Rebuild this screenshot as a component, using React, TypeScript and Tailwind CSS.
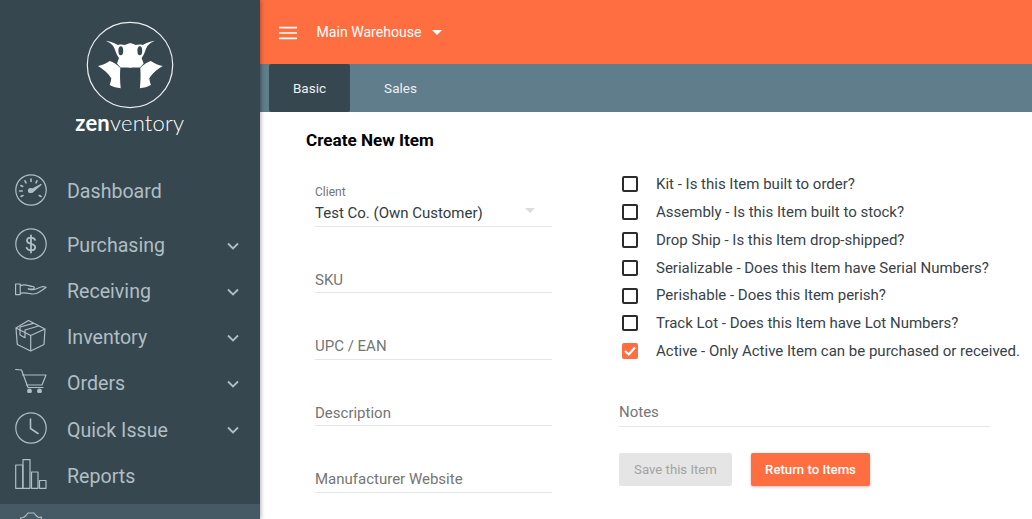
import React from "react";

const stroke = { fill: "none", stroke: "#b0bec5", strokeWidth: 1.2, strokeLinecap: "round" as const, strokeLinejoin: "round" as const };

function Gauge() {
  return (
    <svg viewBox="0 0 32 32" className="w-8 h-8" {...stroke}>
      <circle cx="16" cy="16" r="15.2" />
      <circle cx="15.5" cy="16.5" r="2" fill="#b0bec5" />
      <path d="M16.5 15.5 26 10.500 17.500 18" fill="#b0bec5" />
      <path d="M16 5v2.500M10 6.800l1 2M22 6.800l-1 2M5.800 11.500l2 1M4.600 17h2.600M6 22.500l2-1M26.200 22.500l-2-1" strokeWidth="1.600" />
    </svg>
  );
}
function Dollar() {
  return (
    <svg viewBox="0 0 32 32" className="w-8 h-8" {...stroke}>
      <circle cx="16" cy="16" r="15.2" />
      <path d="M20 11.800c-.6-1.400-2-2.100-4-2.100-2.400 0-4 1.200-4 3 0 4.200 8.200 2.300 8.200 6.600 0 1.900-1.700 3-4.200 3-2.200 0-3.800-.9-4.400-2.500M16 7.500v17" strokeWidth="1.800" />
    </svg>
  );
}
function Hand() {
  return (
    <svg viewBox="0 0 32 14" className="w-8 h-[14px]" {...stroke}>
      <path d="M.6 1h4.600v10.600H.6zM5.200 2.600c3-.9 5.600-.9 8-.1 1.600.5 3 1 4.600 1 1.600 0 2.200 1.600.6 2.200-1.500.5-3.600.4-5.200.2 2 .8 4.200 1.100 6.200.6 3-.8 6-2.800 8.600-2.800 1.600 0 3 .4 3 .9-2.600 1.600-6 4.600-9 5.700-2.600 1-5 .9-7.600.2-3-.8-5.400-1-9.200-.4" />
    </svg>
  );
}
function Box() {
  return (
    <svg viewBox="0 0 32 32" className="w-8 h-8" {...stroke}>
      <path d="M13.500.5 1 8 2.300 24.500 15.700 31 29 24.500 30 9ZM1 8 15.700 15.500 30 9M15.700 15.500V31" />
      <path d="M18.300 3.300 5 7V15L10 17.700V10L23.500 6" />
    </svg>
  );
}
function Cart() {
  return (
    <svg viewBox="0 0 32 24.500" className="w-8 h-[24.500px] -mt-[2px]" {...stroke}>
      <path d="M.7.500 6.500 1 13 18.500H28" />
      <path d="M7.500 6H31L27 16H11.500" />
      <circle cx="14.500" cy="22" r="1.800" fill="#b0bec5" />
      <circle cx="24.500" cy="22" r="1.800" fill="#b0bec5" />
    </svg>
  );
}
function Clock() {
  return (
    <svg viewBox="0 0 32 32" className="w-8 h-8" {...stroke}>
      <circle cx="16" cy="16" r="15.2" />
      <path d="M15.500 7V16.500L23 21.500" strokeWidth="1.600" />
    </svg>
  );
}
function Bars() {
  return (
    <svg viewBox="0 0 32 30" className="w-8 h-[30px]" {...stroke}>
      <rect x="0.700" y="6" width="7" height="23.300" />
      <rect x="8" y="0.700" width="7" height="28.600" />
      <rect x="16.500" y="13" width="6.500" height="16.300" />
      <rect x="24.500" y="21.500" width="6.500" height="7.800" />
    </svg>
  );
}
function Gear() {
  return (
    <svg viewBox="0 0 32 32" className="w-8 h-8" {...stroke}>
      <path d="M1 16c0-3 1-4 2.500-4.500L6 9l-.5-3 3-.5L11 3.500 13 1h6l2 2.500 2.500 2 3-.5L26 9l2.500 2.500C30 12 31 13 31 16" />
    </svg>
  );
}
function Chevron() {
  return (
    <svg viewBox="0 0 12 8" className="w-3 h-2 absolute right-[21px] top-1/2 -mt-1" fill="none" stroke="#b0bec5" strokeWidth="1.800">
      <path d="M1 1.500 6 6.500 11 1.500" />
    </svg>
  );
}

function Logo() {
  const half = "M104.700 40.700C108 41 112 42 117 45 120 44.200 122.500 44.800 124 45 126 43.800 128 43.500 131 43.500V67.500H119.500L116 63.500 118 58C116.500 56 115.500 54 114.700 51.700 114 49.500 113 47.500 112 45.700 110 43.500 107.500 41.800 104.700 40.700Z";
  const wing = "M97 66C101 65.500 105 63.500 108.700 61 112 62 116 64.500 119.300 68 118.800 74 119 81 119.700 88.300 116 87.800 112 86.800 108.700 85 109.500 83 110 80.500 110.300 78.300 107 73 102 69 97 66Z";
  return (
    <svg viewBox="85 21 88 88" className="w-[88px] h-[88px]">
      <circle cx="129" cy="65" r="42.700" fill="none" stroke="#eceff1" strokeWidth="1.200" />
      <g fill="#ffffff">
        <path d={half} />
        <path d={wing} />
        <g transform="translate(258.600 0) scale(-1 1)">
          <path d={half} />
          <path d={wing} />
        </g>
      </g>
      <g fill="#37474f">
        <ellipse cx="119.800" cy="50.800" rx="2.400" ry="4.500" />
        <ellipse cx="138.800" cy="50.800" rx="2.400" ry="4.500" />
      </g>
    </svg>
  );
}

function NavItem({ icon, label, more, className = "" }: { icon: React.ReactNode; label: string; more?: boolean; className?: string }) {
  return (
    <div className={`relative flex items-center h-[46.100px] pl-[15px] ${className}`}>
      <div className="w-8 -mt-[4px] flex justify-center shrink-0">{icon}</div>
      <span className="ml-5 text-[19.600px] text-[#b0bec5]">{label}</span>
      {more && <Chevron />}
    </div>
  );
}

function Field({ label, value, small }: { label?: string; value?: string; small?: string }) {
  return (
    <div className="h-[66.600px] flex flex-col justify-end">
      <div className="relative border-b border-[#e4e6e8] flex flex-col justify-end pb-[1.500px]">
        {small && <span className="text-[12px] leading-[14px] mb-[4.500px] text-[#757575]">{small}</span>}
        {value ? (
          <span className="text-[15px] leading-[21px] text-[#333a40]">{value}</span>
        ) : (
          <span className="text-[15px] leading-[21px] text-[#757575]">{label}</span>
        )}
        {small && <span className="absolute right-[17px] bottom-[13px] w-0 h-0 border-x-[5px] border-x-transparent border-t-[5px] border-t-[#dcdcdc]" />}
      </div>
    </div>
  );
}

const checks = [
  "Kit - Is this Item built to order?",
  "Assembly - Is this Item built to stock?",
  "Drop Ship - Is this Item drop-shipped?",
  "Serializable - Does this Item have Serial Numbers?",
  "Perishable - Does this Item perish?",
  "Track Lot - Does this Item have Lot Numbers?",
];

function Check({ label, checked }: { label: string; checked?: boolean }) {
  return (
    <div className="flex items-center h-[27.800px]">
      {checked ? (
        <div className="w-4 h-4 ml-[3px] rounded-[2px] bg-[#ff6e40] flex items-center justify-center">
          <svg viewBox="0 0 16 16" className="w-4 h-4" fill="none" stroke="#ffffff" strokeWidth="2.200">
            <path d="M3 8 6.800 11.500 13 4.500" />
          </svg>
        </div>
      ) : (
        <div className="w-4 h-4 ml-[3px] rounded-[2px] border-2 border-[#2b2b2b]" />
      )}
      <span className="ml-[18px] text-[15px] text-[#37424a] whitespace-nowrap">{label}</span>
    </div>
  );
}

export default function App() {
  return (
    <div className="flex w-[1032px] h-[519px] overflow-hidden bg-white font-['Roboto',sans-serif]">
      <aside className="relative z-10 w-[259.500px] shrink-0 bg-[#37474f] shadow-[1px_0_4px_rgba(0,0,0,0.3)] overflow-hidden">
        <div className="flex flex-col items-center h-[169px] pt-[21px]">
          <Logo />
          <div className="text-[22px] leading-[28px] text-white font-['Lato',sans-serif] tracking-[0.2px]">
            <span className="font-bold">zen</span>
            <span className="font-light">ventory</span>
          </div>
        </div>
        <NavItem icon={<Gauge />} label="Dashboard" className="mb-[7.700px]" />
        <NavItem icon={<Dollar />} label="Purchasing" more />
        <NavItem icon={<Hand />} label="Receiving" more />
        <NavItem icon={<Box />} label="Inventory" more />
        <NavItem icon={<Cart />} label="Orders" more />
        <NavItem icon={<Clock />} label="Quick Issue" more />
        <NavItem icon={<Bars />} label="Reports" />
        <div className="mt-[4.700px] bg-[#455a64] h-[60px] pl-[15px] pt-[8px]">
          <Gear />
        </div>
      </aside>

      <main className="flex-1 min-w-0 flex flex-col">
        <header className="h-16 bg-[#ff6e40] flex items-center pl-[19px] pt-[1px] text-white">
          <svg viewBox="0 0 18 14" className="w-[18px] h-[14px]" fill="#ffffff">
            <path d="M0 .8h18v1.600H0zM0 6.200h18v1.600H0zM0 11.600h18v1.600H0z" />
          </svg>
          <span className="ml-5 text-[14.100px]">Main Warehouse</span>
          <span className="ml-[10px] w-0 h-0 border-x-[5px] border-x-transparent border-t-[5px] border-t-white" />
        </header>
        <nav className="h-12 bg-[#607d8b] flex pl-[9.500px] text-[13.500px] text-[#eceff1] shadow-[inset_3px_0_3px_-2px_rgba(0,0,0,0.1)]">
          <div className="w-[81px] bg-[#37474f] rounded-[2px] flex items-center justify-center">Basic</div>
          <div className="w-[101px] flex items-center justify-center">Sales</div>
        </nav>
        <h1 className="ml-[46.500px] mt-[17px] text-[17.100px] leading-[22px] font-bold text-black">Create New Item</h1>
        <div className="flex ml-[55.500px]">
          <div className="w-[237px] mt-[9px]">
            <Field small="Client" value="Test Co. (Own Customer)" />
            <Field label="SKU" />
            <Field label="UPC / EAN" />
            <Field label="Description" />
            <Field label="Manufacturer Website" />
          </div>
          <div className="ml-[67px] w-[371px] pt-[19.600px]">
            {checks.map((c) => (
              <Check key={c} label={c} />
            ))}
            <Check label="Active - Only Active Item can be purchased or received." checked />
            <div className="h-[25px] mt-[36.900px] border-b border-[#e4e6e8] text-[15px] leading-[21px] text-[#757575]">Notes</div>
            <div className="flex mt-[26px] gap-[19px] text-[13.200px]">
              <div className="w-[113px] h-[33px] rounded-[2px] bg-[#e5e5e5] text-[#a3a3a3] flex items-center justify-center">Save this Item</div>
              <div className="w-[119px] h-[33px] rounded-[2px] bg-[#ff6e40] text-white font-medium flex items-center justify-center shadow-[0_1px_3px_rgba(0,0,0,0.25)]">Return to Items</div>
            </div>
          </div>
        </div>
      </main>
    </div>
  );
}
